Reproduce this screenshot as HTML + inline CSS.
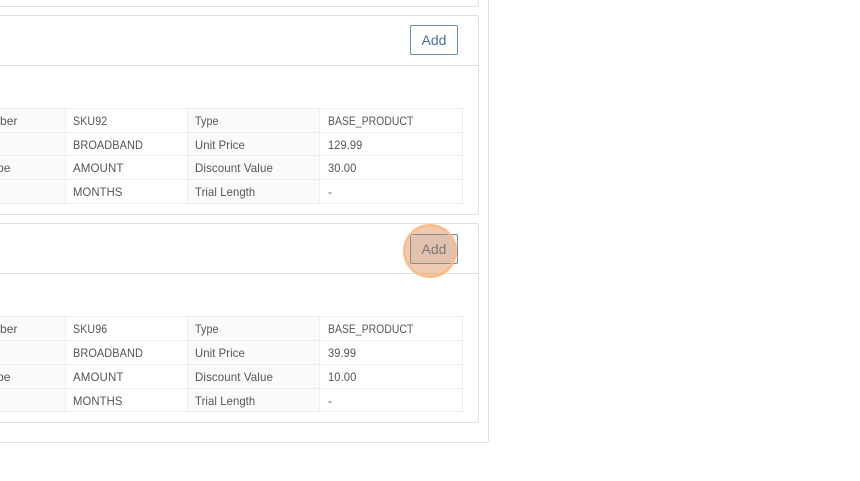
<!DOCTYPE html>
<html><head><meta charset="utf-8">
<style>
html,body{margin:0;padding:0;background:#fff;width:860px;height:481px;overflow:hidden}
body{position:relative;font-family:"Liberation Sans",sans-serif;font-size:12px;color:#50565c}
.b{position:absolute;box-sizing:border-box;border:1px solid #dedede;background:#fff}
.h{position:absolute;height:1px;background:#dedede}
.l{position:absolute;background:#eeeeee}
.f{position:absolute;background:#fafafa}
.t{position:absolute;white-space:nowrap;line-height:16px;letter-spacing:.1px;transform-origin:0 50%}
.btn{position:absolute;box-sizing:border-box;left:410px;width:48px;height:30px;border:1px solid #6b8fb8;border-radius:2px;background:#fff;color:#44709f;font-size:14px;line-height:28px;text-align:center}
.c{position:absolute;left:403px;top:224px;width:54px;height:54px;box-sizing:border-box;border-radius:50%;border:3px solid rgba(250,178,118,.85);background:rgba(215,125,60,.4);background-clip:padding-box}
</style></head><body>
<div class="b" style="left:-10px;top:-20px;width:499px;height:463px;border-radius:3px"></div>
<div class="b" style="left:-5px;top:-20px;width:484px;height:27px;border-radius:3px"></div>

<div class="b" style="left:-5px;top:15px;width:484px;height:200px;border-radius:3px"></div>
<div class="h" style="left:0;top:65px;width:478px"></div>
<div class="btn" style="top:25px">Add</div>

<div class="f" style="left:0;top:109px;width:65px;height:94px"></div>
<div class="f" style="left:188px;top:109px;width:131px;height:94px"></div>
<div class="l" style="left:0;top:108px;width:463px;height:1px"></div>
<div class="l" style="left:0;top:132px;width:463px;height:1px"></div>
<div class="l" style="left:0;top:155px;width:463px;height:1px"></div>
<div class="l" style="left:0;top:179px;width:463px;height:1px"></div>
<div class="l" style="left:0;top:203px;width:463px;height:1px"></div>
<div class="l" style="left:65px;top:108px;width:1px;height:96px"></div>
<div class="l" style="left:187px;top:108px;width:1px;height:96px"></div>
<div class="l" style="left:319px;top:108px;width:1px;height:96px"></div>
<div class="l" style="left:462px;top:108px;width:1px;height:96px"></div>

<div class="t" style="left:0;top:113px">ber</div>
<div class="t" style="left:-3px;top:160px">pe</div>
<div class="t" style="left:73px;top:113px;transform:scaleX(.89)">SKU92</div>
<div class="t" style="left:73px;top:137px;transform:scaleX(.91)">BROADBAND</div>
<div class="t" style="left:73px;top:160px;transform:scaleX(.96)">AMOUNT</div>
<div class="t" style="left:73px;top:184px;transform:scaleX(.94)">MONTHS</div>
<div class="t" style="left:195px;top:113px;transform:scaleX(.89)">Type</div>
<div class="t" style="left:195px;top:137px;transform:scaleX(.94)">Unit Price</div>
<div class="t" style="left:195px;top:160px;transform:scaleX(.96)">Discount Value</div>
<div class="t" style="left:195px;top:184px;transform:scaleX(.94)">Trial Length</div>
<div class="t" style="left:328px;top:113px;transform:scaleX(.86)">BASE_PRODUCT</div>
<div class="t" style="left:328px;top:137px;transform:scaleX(.92)">129.99</div>
<div class="t" style="left:328px;top:160px;transform:scaleX(.93)">30.00</div>
<div class="t" style="left:328px;top:184px">-</div>

<div class="b" style="left:-5px;top:223px;width:484px;height:200px;border-radius:3px"></div>
<div class="h" style="left:0;top:273px;width:478px"></div>
<div class="btn" style="top:234px;background:#e7f1fb">Add</div>

<div class="f" style="left:0;top:317px;width:65px;height:94px"></div>
<div class="f" style="left:188px;top:317px;width:131px;height:94px"></div>
<div class="l" style="left:0;top:316px;width:463px;height:1px"></div>
<div class="l" style="left:0;top:340px;width:463px;height:1px"></div>
<div class="l" style="left:0;top:364px;width:463px;height:1px"></div>
<div class="l" style="left:0;top:388px;width:463px;height:1px"></div>
<div class="l" style="left:0;top:411px;width:463px;height:1px"></div>
<div class="l" style="left:65px;top:316px;width:1px;height:96px"></div>
<div class="l" style="left:187px;top:316px;width:1px;height:96px"></div>
<div class="l" style="left:319px;top:316px;width:1px;height:96px"></div>
<div class="l" style="left:462px;top:316px;width:1px;height:96px"></div>

<div class="t" style="left:0;top:321px">ber</div>
<div class="t" style="left:-3px;top:369px">pe</div>
<div class="t" style="left:73px;top:321px;transform:scaleX(.89)">SKU96</div>
<div class="t" style="left:73px;top:345px;transform:scaleX(.91)">BROADBAND</div>
<div class="t" style="left:73px;top:369px;transform:scaleX(.96)">AMOUNT</div>
<div class="t" style="left:73px;top:393px;transform:scaleX(.94)">MONTHS</div>
<div class="t" style="left:195px;top:321px;transform:scaleX(.89)">Type</div>
<div class="t" style="left:195px;top:345px;transform:scaleX(.94)">Unit Price</div>
<div class="t" style="left:195px;top:369px;transform:scaleX(.96)">Discount Value</div>
<div class="t" style="left:195px;top:393px;transform:scaleX(.94)">Trial Length</div>
<div class="t" style="left:328px;top:321px;transform:scaleX(.86)">BASE_PRODUCT</div>
<div class="t" style="left:328px;top:345px;transform:scaleX(.92)">39.99</div>
<div class="t" style="left:328px;top:369px;transform:scaleX(.93)">10.00</div>
<div class="t" style="left:328px;top:393px">-</div>

<div class="c"></div>
</body></html>
